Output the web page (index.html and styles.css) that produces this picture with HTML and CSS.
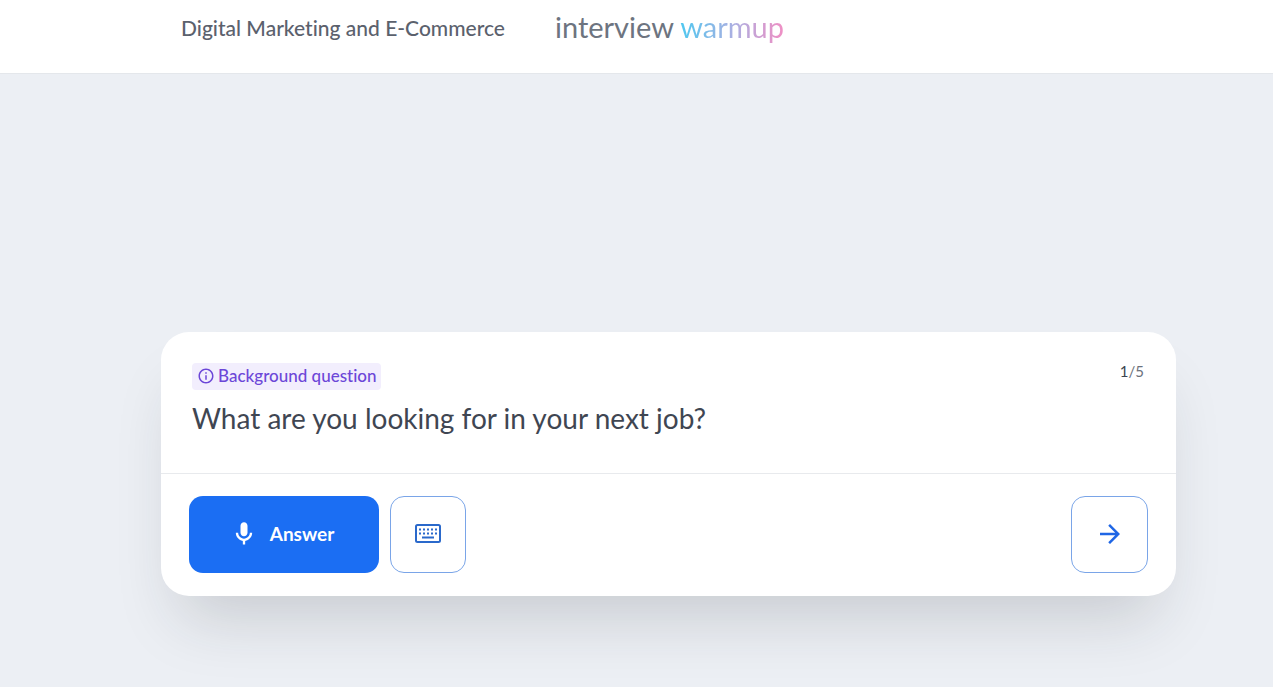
FILE: index.html
```html
<!DOCTYPE html>
<html lang="en">
<head>
<meta charset="utf-8">
<meta name="viewport" content="width=device-width, initial-scale=1">
<title>Interview Warmup</title>
<link rel="stylesheet" href="styles.css">
</head>
<body>
<header class="topbar">
  <h1 class="topic">Digital Marketing and E-Commerce</h1>
  <a class="brand" href="#">interview <span class="brand-accent">warmup</span></a>
</header>
<main class="stage">
  <section class="card">
    <div class="prompt">
      <div class="prompt-body">
        <p class="tag">
          <svg class="tag-icon" viewBox="0 0 24 24" aria-hidden="true"><path d="M11 7h2v2h-2zm0 4h2v6h-2zm1-9C6.48 2 2 6.48 2 12s4.480 10 10 10 10-4.480 10-10S17.520 2 12 2zm0 18c-4.410 0-8-3.590-8-8s3.590-8 8-8 8 3.590 8 8-3.590 8-8 8z"/></svg>
          <span>Background question</span>
        </p>
        <h2 class="question">What are you looking for in your next job?</h2>
      </div>
      <p class="progress"><span class="current">1</span>/<span>5</span></p>
    </div>
    <div class="actions">
      <button class="btn btn-answer" type="button">
        <svg class="icon-mic" viewBox="0 0 24 24" aria-hidden="true"><path d="M12 14c1.660 0 3-1.340 3-3V5c0-1.660-1.340-3-3-3S9 3.340 9 5v6c0 1.660 1.340 3 3 3zm5-3c0 2.760-2.240 5-5 5s-5-2.240-5-5H5c0 3.530 2.610 6.430 6 6.920V21h2v-3.080c3.390-.49 6-3.390 6-6.920h-2z"/></svg>
        <span>Answer</span>
      </button>
      <button class="btn btn-outline" type="button" aria-label="Type your answer">
        <svg class="icon-keyboard" viewBox="0 0 26 19" aria-hidden="true">
          <rect x="1" y="1" width="24" height="17" rx="1.500" fill="none" stroke="currentColor" stroke-width="2"/>
          <path d="M4 4.500h2v2H4zM8 4.500h2v2H8zM12 4.500h2v2h-2zM16 4.500h2v2h-2zM20 4.500h2v2h-2zM4 8.500h2v2H4zM8 8.500h2v2H8zM12 8.500h2v2h-2zM16 8.500h2v2h-2zM20 8.500h2v2h-2zM7 12.500h12v2H7z"/>
        </svg>
      </button>
      <button class="btn btn-outline btn-next" type="button" aria-label="Next question">
        <svg class="icon-arrow" viewBox="0 0 24 24" aria-hidden="true"><path d="M12 4l-1.410 1.410L16.170 11H4v2h12.170l-5.580 5.590L12 20l8-8z"/></svg>
      </button>
    </div>
  </section>
</main>
</body>
</html>
```
FILE: styles.css
```css
* {
  box-sizing: border-box;
}

body {
  margin: 0;
  min-height: 100vh;
  background: #eceff4;
  color: #3c4450;
  font-family: Lato, "Open Sans", sans-serif;
  font-variant-ligatures: none;
}

h1, h2, p {
  margin: 0;
  font-weight: 400;
}

svg {
  display: block;
  flex: none;
  fill: currentColor;
}

.topbar {
  display: flex;
  align-items: flex-start;
  gap: 50px;
  padding: 8px 97px 25px 181px;
  background: #fff;
  border-bottom: 1px solid #e4e7eb;
}

.topic {
  color: #5b616d;
  font-size: 21px;
  font-weight: 500;
  line-height: 40px;
}

.brand {
  color: #6d7480;
  font-size: 29px;
  line-height: 38px;
  text-decoration: none;
}

.brand-accent {
  background: linear-gradient(90deg, #4fc8f0, #a9b0e2 50%, #f08fc4);
  background-clip: text;
  -webkit-background-clip: text;
  color: transparent;
}

.stage {
  padding: 258px 97px 88px 161px;
}

.card {
  background: #fff;
  border-radius: 28px;
  box-shadow: 0 40px 64px -20px rgba(32, 38, 46, 0.18);
}

.prompt {
  display: flex;
  justify-content: space-between;
  align-items: flex-start;
  padding: 31px 32px 35px 31px;
  border-bottom: 1px solid #e8eaed;
}

.tag {
  display: flex;
  align-items: center;
  gap: 3px;
  width: fit-content;
  padding: 0 4px 1px 5px;
  border-radius: 4px;
  background: #f2eefd;
  color: #6c47d8;
  font-size: 17px;
  font-weight: 500;
  line-height: 26px;
}

.tag-icon {
  width: 18px;
  height: 18px;
}

.question {
  margin-top: 8px;
  color: #3f4652;
  font-size: 28px;
  line-height: 40px;
}

.progress {
  color: #6b717c;
  font-size: 15px;
  line-height: 17px;
}

.current {
  color: #3c4450;
}

.actions {
  display: flex;
  gap: 11px;
  padding: 22px 28px 23px;
}

.btn {
  display: flex;
  align-items: center;
  justify-content: center;
  height: 77px;
  padding: 0 0 2px;
  border: 0;
  border-radius: 14px;
  font: inherit;
  cursor: pointer;
}

.btn-answer {
  gap: 12px;
  width: 190px;
  padding-right: 4px;
  background: #1b6ef3;
  color: #fff;
  font-size: 19px;
  font-weight: 700;
}

.btn-outline {
  width: 76px;
  border: 1px solid #7aa5e8;
  background: #fff;
  color: #2a69cb;
}

.btn-next {
  width: 77px;
  margin-left: auto;
  color: #1f66e5;
}

.icon-mic {
  width: 28px;
  height: 28px;
}

.icon-keyboard {
  width: 26px;
  height: 19px;
}

.icon-arrow {
  width: 30px;
  height: 30px;
}
```
